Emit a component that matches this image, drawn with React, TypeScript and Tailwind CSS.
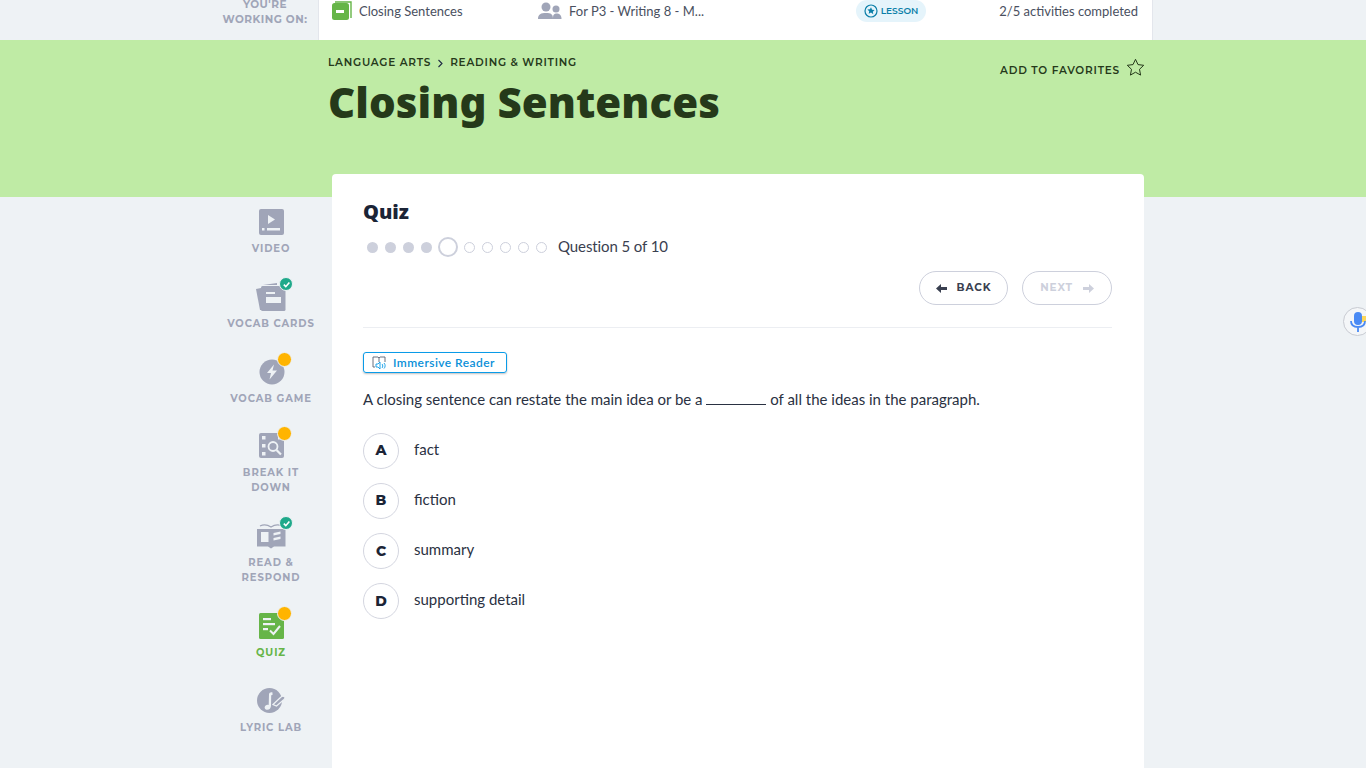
import React from "react";

const body = "font-['Lato','Noto_Sans',sans-serif]";
const label = "font-['Montserrat','Lato',sans-serif]";
const heavy = "font-['Noto_Sans',sans-serif]";

function Dot({ kind }: { kind: "check" | "orange" | "none" }) {
  if (kind === "none") return null;
  if (kind === "orange")
    return <span className="absolute left-[20px] -top-[6px] h-[13px] w-[13px] rounded-full border border-[#eef2f5] bg-[#ffb400] box-content" />;
  return (
    <span className="absolute left-[22px] -top-[6px] flex h-[12px] w-[12px] items-center justify-center rounded-full bg-[#1fa98a] box-content border border-[#eef2f5]">
      <svg width="9" height="9" viewBox="0 0 10 10"><path d="M2 5.2 4.2 7.4 8.2 2.8" fill="none" stroke="#fff" strokeWidth="1.8" /></svg>
    </span>
  );
}

const G = "#a0a5b8";
const icons: Record<string, React.ReactNode> = {
  video: (
    <svg className="shrink-0" width="28" height="28" viewBox="0 0 28 28"><rect x="2" y="1" width="25" height="26" rx="2" fill={G} /><path d="M11 7l7 4.500-7 4.500z" fill="#eef2f5" /><rect x="5" y="20" width="2.500" height="2.500" fill="#eef2f5" /><rect x="10" y="20" width="13" height="2.500" fill="#eef2f5" /></svg>
  ),
  cards: (
    <svg className="shrink-0" width="32" height="30" viewBox="0 0 32 30"><path d="M1 7l5-1 0 22-1 0z" fill={G} /><path d="M8 3l14-2v2z" fill={G} /><rect x="6" y="4" width="24.500" height="25" rx="1.500" fill={G} /><rect x="11" y="10" width="9" height="2" fill="#eef2f5" /><rect x="11" y="15" width="15" height="6" fill="#eef2f5" /></svg>
  ),
  game: (
    <svg className="shrink-0" width="28" height="28" viewBox="0 0 28 28"><circle cx="15" cy="14" r="12.500" fill={G} /><path d="M17 6.500 10 15h4l-1.500 6.500L20 12.500h-4.500z" fill="#eef2f5" /></svg>
  ),
  brk: (
    <svg className="shrink-0" width="28" height="28" viewBox="0 0 28 28"><rect x="2" y="1" width="25" height="25" rx="2" fill={G} /><rect x="5" y="4" width="3.500" height="3.500" fill="#eef2f5" /><rect x="21" y="4" width="3.500" height="3.500" fill="#eef2f5" /><rect x="5" y="12" width="3.500" height="3.500" fill="#eef2f5" /><rect x="5" y="20" width="3.500" height="3.500" fill="#eef2f5" /><circle cx="16" cy="14.500" r="4.500" fill="none" stroke="#eef2f5" strokeWidth="1.800" /><path d="M19.500 18 24 22.500" stroke="#eef2f5" strokeWidth="2.200" /></svg>
  ),
  read: (
    <svg className="shrink-0" width="30" height="28" viewBox="0 0 30 28"><path d="M4 4c4-2 8-1 11 1 3-2 7-3 11-1" fill="none" stroke={G} strokeWidth="1.300" /><path d="M1 7h28.500v17.500H18L15 26.500 12 24.500H1z" fill={G} /><path d="M5 10h7.500v10H5zM17.500 11l7-1.500v2.500l-7 1.500zM17.500 16l7-1.500V17l-7 1.500z" fill="#eef2f5" /></svg>
  ),
  quiz: (
    <svg className="shrink-0" width="28" height="28" viewBox="0 0 28 28"><rect x="2" y="1" width="25" height="26" rx="1.500" fill="#66b548" /><rect x="6" y="6" width="8" height="2.200" fill="#eef2f5" /><rect x="6" y="11" width="12" height="2.200" fill="#eef2f5" /><rect x="6" y="16" width="5" height="2.200" fill="#eef2f5" /><path d="M13 18.500l3.500 3.500 6.500-8" fill="none" stroke="#eef2f5" strokeWidth="2" /></svg>
  ),
  lyric: (
    <svg className="shrink-0" width="30" height="28" viewBox="0 0 30 28"><circle cx="13.500" cy="13.500" r="12.500" fill={G} /><path d="M13 7.500c0-2 2-2.500 3.500-2v2.500c-1-.3-1.300 0-1.300.7l-.2 10c0 2.500-2 4.500-4.500 4-2-.5-2.500-3-.8-4.300 1-.8 2-.8 3-.4z" fill="#eef2f5" /><path d="M17 17.500l8-7.500c1-1 2.500-1 3.500-.3.8.8.5 1.800-.5 2.800l-7.500 6.500z" fill={G} stroke="#eef2f5" strokeWidth="1.200" /></svg>
  ),
};

const nav = [
  { k: "video", t: ["VIDEO"], d: "none", h: "h-[75px]" },
  { k: "cards", t: ["VOCAB CARDS"], d: "check", h: "h-[75px]" },
  { k: "game", t: ["VOCAB GAME"], d: "orange", h: "h-[74px]" },
  { k: "brk", t: ["BREAK IT", "DOWN"], d: "orange", h: "h-[90px]" },
  { k: "read", t: ["READ &", "RESPOND"], d: "check", h: "h-[90px]" },
  { k: "quiz", t: ["QUIZ"], d: "orange", h: "h-[75px]" },
  { k: "lyric", t: ["LYRIC LAB"], d: "none", h: "h-[75px]" },
] as const;

function Nav() {
  return (
    <div className="flex w-[122px] shrink-0 flex-col items-center pt-[11px]">
      {nav.map((n) => (
        <div key={n.k} className={`flex w-full flex-col items-center ${n.h}`}>
          <div className="relative flex h-[28px] w-[28px] items-center justify-center">
            {icons[n.k]}
            <Dot kind={n.d} />
          </div>
          <div className={`mt-[5px] text-center text-[10px] font-bold leading-[15px] tracking-[0.900px] ${label} ${n.k === "quiz" ? "text-[#66b548]" : "text-[#a0a5b8]"}`}>
            {n.t.map((l) => <div key={l}>{l}</div>)}
          </div>
        </div>
      ))}
    </div>
  );
}

function Choice({ l, t }: { l: string; t: string }) {
  return (
    <div className="flex h-[50.300px] items-start">
      <div className={`flex h-[36px] w-[36px] items-center justify-center rounded-full border border-[#d4d6e0] text-[14px] font-extrabold text-[#1b2436] ${label}`}>{l}</div>
      <div className="ml-[15px] pt-[5px] text-[15px] leading-[22px] text-[#2a3142]">{t}</div>
    </div>
  );
}

export default function App() {
  return (
    <div className={`relative h-[768px] w-[1366px] overflow-hidden bg-[#eef2f5] ${body}`}>
      <div className="flex h-[40px] overflow-hidden">
        <div className="w-[318px] shrink-0">
          <div className={`-mt-[3px] ml-[222px] w-[86px] text-center text-[10.500px] font-bold leading-[15px] tracking-[0.500px] text-[#a0a5b8] ${label}`}>
            <div>YOU'RE</div>
            <div>WORKING ON:</div>
          </div>
        </div>
        <div className="flex h-[40px] w-[835px] items-start border-l border-r border-[#e3e6ec] bg-white text-[13px] leading-[22px] text-[#4a5060]">
          <div className="flex w-[205px] items-center pl-[12px]">
            <svg className="shrink-0" width="21" height="20" viewBox="0 0 21 20"><path d="M4 1h16v16" fill="none" stroke="#66b548" strokeWidth="1.400" /><rect x="1" y="2" width="17" height="17" rx="2.500" fill="#66b548" /><rect x="5" y="9" width="8" height="3" fill="#fff" /></svg>
            <span className="ml-[7px]">Closing Sentences</span>
          </div>
          <div className="flex w-[332px] items-center pl-[14px]">
            <svg className="shrink-0" width="24" height="18" viewBox="0 0 24 18"><circle cx="8" cy="5" r="4.500" fill={G} /><path d="M0 17c0-5 3-6 8-6s7 1 7 6z" fill={G} /><circle cx="18" cy="7" r="3.500" fill={G} /><path d="M15 17c0-3 0-5 3-5.500 4 0 5.500 2 5.500 5.500z" fill={G} /></svg>
            <span className="ml-[7px]">For P3 - Writing 8 - M...</span>
          </div>
          <div className="flex h-[22px] w-[70px] items-center justify-center rounded-full bg-[#e5f4fb] text-[#0a7ea8]">
            <svg className="shrink-0" width="14" height="14" viewBox="0 0 14 14"><circle cx="7" cy="7" r="6" fill="none" stroke="#0a7ea8" strokeWidth="1.200" /><path d="M7 3.300l1.100 2.400 2.500.3-1.800 1.700.5 2.500L7 8.500 4.700 9.700l.5-2.500L3.400 5.500l2.500-.3z" fill="#0a7ea8" /></svg>
            <span className={`ml-[3px] text-[9px] font-semibold ${label}`}>LESSON</span>
          </div>
          <div className="ml-auto pr-[14px]">2/5 activities completed</div>
        </div>
      </div>

      <div className="relative flex h-[157px] justify-between bg-[#bfeba5] pl-[328px] pr-[221px] text-[#25391a]">
        <div>
          <div className={`flex items-center pt-[15px] text-[10.500px] font-semibold leading-[16px] tracking-[0.780px] ${label}`}>
            <span>LANGUAGE ARTS</span>
            <svg className="mx-[6px]" width="7" height="9" viewBox="0 0 7 9"><path d="M1.500 1 5 4.500 1.500 8" fill="none" stroke="#1f2a44" strokeWidth="1.100" /></svg>
            <span>READING &amp; WRITING</span>
          </div>
          <h1 className={`mt-[3px] whitespace-nowrap text-[42px] font-black leading-[56px] tracking-[0.050px] ${heavy}`}>Closing Sentences</h1>
        </div>
        <div className={`flex items-start pt-[19px] text-[10.500px] font-semibold leading-[20px] tracking-[0.800px] ${label}`}>
          <span className="pt-[2px]">ADD TO FAVORITES</span>
          <svg className="-mt-[1px] ml-[6px]" width="19" height="19" viewBox="0 0 19 19"><path d="M9.500 1.300l2.500 5.300 5.700.7-4.200 4 1.100 5.800-5.100-2.900-5.100 2.900 1.100-5.800-4.200-4 5.700-.7z" fill="none" stroke="#25391a" strokeWidth="1" /></svg>
        </div>
      </div>

      <div className="flex pl-[210px]">
        <Nav />
        <main className="relative -mt-[23px] h-[620px] w-[812px] rounded-t-[4px] bg-white pl-[31px] pr-[32px] pt-[24px]">
          <h2 className={`text-[20px] font-black leading-[28px] text-[#1b2436] ${heavy}`}>Quiz</h2>
          <div className="mt-[10px] flex h-[22px] items-center">
            {[0, 1, 2, 3].map((i) => <span key={i} className="ml-[4px] mr-[3px] h-[11px] w-[11px] rounded-full bg-[#cdd0dc]" />)}
            <span className="ml-[3px] mr-[6px] h-[20px] w-[20px] rounded-full border-2 border-[#cdd0dc]" />
            {[0, 1, 2, 3, 4].map((i) => <span key={i} className="mr-[7px] h-[11px] w-[11px] rounded-full border border-[#cdd0dc]" />)}
            <span className="ml-[4px] -translate-y-px text-[15px] tracking-[-0.100px] text-[#3a4050]">Question 5 of 10</span>
          </div>
          <div className="mt-[13px] flex justify-end gap-[14px]">
            <button className={`flex h-[34px] w-[89px] items-center justify-center rounded-full border border-[#cdd0dc] text-[10.500px] font-bold tracking-[0.900px] text-[#3a4050] ${label}`}>
              <svg className="mr-[10px]" width="11" height="9" viewBox="0 0 11 9"><path d="M5 0 0 4.500 5 9V6h6V3H5z" fill="#3a4050" /></svg>BACK
            </button>
            <button className={`flex h-[34px] w-[90px] items-center justify-center rounded-full border border-[#cdd0dc] text-[10.500px] font-bold tracking-[0.900px] text-[#cdd0dc] ${label}`}>
              NEXT<svg className="ml-[10px]" width="11" height="9" viewBox="0 0 11 9"><path d="M6 0l5 4.500L6 9V6H0V3h6z" fill="#cdd0dc" /></svg>
            </button>
          </div>
          <div className="mt-[22px] h-px bg-[#eceef2]" />
          <div className="mt-[24px] flex h-[21px] w-[144px] items-center rounded-[3px] border border-[#0a9be8] pl-[8px] shadow-[0_1px_2px_rgba(0,0,0,0.25)]">
            <svg className="shrink-0" width="16" height="15" viewBox="0 0 16 15" fill="none" stroke="#5a6070" strokeWidth="0.900"><path d="M3 12H1V2h5l1 1 1-1h5v5M7 3v4" /><path d="M4 9h2l2-2v7l-2-2H4zM10 9c1 1 1 3 0 4M12 8c1.500 1.500 1.500 4 0 5.500" stroke="#0a9be8" /></svg>
            <span className="ml-[5px] whitespace-nowrap text-[12px] font-semibold tracking-[0.430px] text-[#0a8fd8]">Immersive Reader</span>
          </div>
          <p className="mt-[15px] text-[15px] leading-[22px] text-[#2a3142]">A closing sentence can restate the main idea or be a <span className="inline-block h-[12px] w-[60px] border-b border-[#2a3142] align-baseline" /> of all the ideas in the paragraph.</p>
          <div className="mt-[22.500px]">
            <Choice l="A" t="fact" />
            <Choice l="B" t="fiction" />
            <Choice l="C" t="summary" />
            <Choice l="D" t="supporting detail" />
          </div>
        </main>
      </div>

      <div className="absolute left-[1343px] top-[307px] flex h-[29px] w-[29px] items-center justify-center rounded-full border border-[#c8cbd2] bg-[#f4f6f8]">
        <svg width="18" height="22" viewBox="0 0 18 22"><rect x="12" y="5" width="6" height="6" fill="#fbd75b" /><rect x="5" y="1" width="8" height="13" rx="4" fill="#4a8af4" /><path d="M2 10c0 4 3 6 7 6s7-2 7-6M9 16v5" fill="none" stroke="#4a8af4" strokeWidth="1.800" /></svg>
      </div>
    </div>
  );
}
